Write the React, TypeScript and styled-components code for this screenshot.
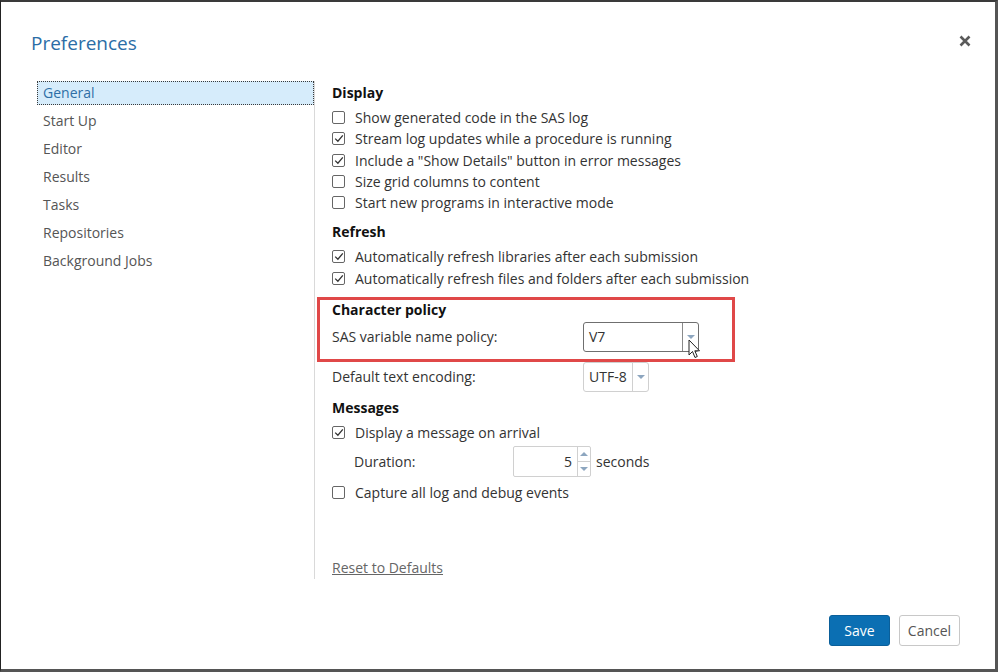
import React from "react";
import styled, { createGlobalStyle } from "styled-components";

const Global = createGlobalStyle`
  html, body { margin: 0; padding: 0; background: #fff; }
  body { font-family: "Open Sans", "Liberation Sans", sans-serif; }
  * { box-sizing: border-box; }
`;

const Frame = styled.div`
  width: 998px;
  height: 672px;
  background: #fff;
  border-top: 2px solid #3a3a3a;
  border-left: 1px solid #222;
  border-right: 3px solid #555;
  border-bottom: 3px solid #555;
  display: flex;
  flex-direction: column;
  position: relative;
  overflow: hidden;
`;

const Header = styled.div`
  height: 79px;
  display: flex;
  align-items: flex-start;
  justify-content: space-between;
  padding: 28px 23px 0 30px;
`;

const Title = styled.h1`
  margin: 0;
  font-size: 19px;
  font-weight: 400;
  color: #2b6da6;
  line-height: 26px;
`;

const Close = styled.button`
  border: 0;
  background: none;
  padding: 0;
  width: 14px;
  height: 14px;
  margin-top: 4px;
  display: flex;
  align-items: center;
  justify-content: center;
  cursor: pointer;
`;

const Body = styled.div`
  display: flex;
  height: 498px;
  padding-left: 36px;
`;

const Nav = styled.ul`
  list-style: none;
  margin: 0;
  padding: 0;
  width: 277px;
  flex-shrink: 0;
`;

const NavItem = styled.li<{ $active?: boolean }>`
  height: 24px;
  margin-bottom: 4px;
  padding-left: 5px;
  font-size: 14px;
  line-height: 22px;
  color: ${(p) => (p.$active ? "#2e6fa6" : "#555")};
  background: ${(p) => (p.$active ? "#d6ecfb" : "transparent")};
  border: 1px dotted ${(p) => (p.$active ? "#3a3a3a" : "transparent")};
`;

const Divider = styled.div`
  width: 1px;
  background: #d9d9d9;
  flex-shrink: 0;
`;

const Content = styled.div`
  flex: 1;
  padding: 2px 0 0 17px;
  display: flex;
  flex-direction: column;
  color: #333;
  font-size: 14px;
`;

const Heading = styled.div<{ $top?: number; $bottom?: number }>`
  font-weight: 700;
  color: #111;
  font-size: 14px;
  line-height: 20px;
  margin-top: ${(p) => p.$top ?? 0}px;
  margin-bottom: ${(p) => p.$bottom ?? 4}px;
`;

const Row = styled.label<{ $top?: number }>`
  display: flex;
  align-items: center;
  height: 21.25px;
  gap: 10px;
  margin-top: ${(p) => p.$top ?? 0}px;
  color: #333;
`;

const Box = styled.span`
  width: 13px;
  height: 13px;
  border: 1px solid #666;
  border-radius: 2px;
  display: flex;
  align-items: center;
  justify-content: center;
  background: #fff;
  flex-shrink: 0;
`;

const Highlight = styled.div`
  margin: 8px 0 0 -15px;
  width: 418px;
  border: 3px solid #e04848;
  padding: 0 0 7px 12px;
`;

const FieldRow = styled.div<{ $label: number; $indent?: number; $top?: number }>`
  display: flex;
  align-items: center;
  height: 30px;
  margin-top: ${(p) => p.$top ?? 0}px;
  padding-left: ${(p) => p.$indent ?? 0}px;
  & > span:first-child {
    width: ${(p) => p.$label}px;
    flex-shrink: 0;
    color: #333;
  }
`;

const Select = styled.div<{ $w: number; $dark?: boolean }>`
  width: ${(p) => p.$w}px;
  height: 30px;
  border: 1px solid ${(p) => (p.$dark ? "#6f6f6f" : "#d0d0d0")};
  border-radius: 3px;
  display: flex;
  align-items: stretch;
  background: #fff;
`;

const SelectValue = styled.div`
  flex: 1;
  display: flex;
  align-items: center;
  padding-left: 5px;
  color: #333;
`;

const SelectArrow = styled.div<{ $dark?: boolean }>`
  width: 16px;
  border-left: 1px solid ${(p) => (p.$dark ? "#8a8a8a" : "#d0d0d0")};
  display: flex;
  align-items: center;
  justify-content: center;
`;

const Tri = styled.span<{ $up?: boolean }>`
  width: 0;
  height: 0;
  border-left: 4px solid transparent;
  border-right: 4px solid transparent;
  ${(p) =>
    p.$up
      ? "border-bottom: 4px solid #8da6bf;"
      : "border-top: 4px solid #8da6bf;"}
`;

const Spinner = styled.div`
  width: 78px;
  height: 31px;
  border: 1px solid #d0d0d0;
  border-radius: 2px;
  display: flex;
  align-items: stretch;
`;

const SpinValue = styled.div`
  flex: 1;
  display: flex;
  align-items: center;
  justify-content: flex-end;
  padding-right: 5px;
  color: #333;
`;

const SpinButtons = styled.div`
  width: 13px;
  border-left: 1px solid #d0d0d0;
  display: flex;
  flex-direction: column;
  & > div {
    flex: 1;
    display: flex;
    align-items: center;
    justify-content: center;
  }
  & > div:first-child {
    border-bottom: 1px solid #d0d0d0;
  }
`;

const Suffix = styled.span`
  margin-left: 5px;
  color: #333;
`;

const Spacer = styled.div`
  flex: 1;
`;

const ResetLink = styled.a`
  color: #666;
  text-decoration: underline;
  font-size: 14px;
  line-height: 20px;
  margin-bottom: 1px;
  cursor: pointer;
  align-self: flex-start;
`;

const Footer = styled.div`
  display: flex;
  justify-content: flex-end;
  gap: 9px;
  padding: 36px 35px 0 0;
`;

const Button = styled.button<{ $primary?: boolean }>`
  width: 61px;
  height: 31px;
  border-radius: 3px;
  font-family: inherit;
  font-size: 14px;
  cursor: pointer;
  color: ${(p) => (p.$primary ? "#fff" : "#555")};
  background: ${(p) => (p.$primary ? "#0b6fb3" : "#fff")};
  border: 1px solid ${(p) => (p.$primary ? "#0a5f9a" : "#c8c8c8")};
`;

const Pointer = styled.svg`
  position: absolute;
  left: 687px;
  top: 337px;
`;

const Check = () => (
  <svg width="10" height="9" viewBox="0 0 10 9">
    <path d="M1.2 4.6 L3.9 7.2 L8.8 1.4" fill="none" stroke="#333" strokeWidth="1.3" />
  </svg>
);

const CheckRow = ({ checked, children, top }: { checked?: boolean; children: React.ReactNode; top?: number }) => (
  <Row $top={top}>
    <Box>{checked && <Check />}</Box>
    <span>{children}</span>
  </Row>
);

const navItems = ["General", "Start Up", "Editor", "Results", "Tasks", "Repositories", "Background Jobs"];

export default function App() {
  return (
    <>
      <Global />
      <Frame>
        <Header>
          <Title>Preferences</Title>
          <Close aria-label="Close">
            <svg width="12" height="12" viewBox="0 0 12 12">
              <path d="M1.5 1.5 L10.5 10.5 M10.5 1.5 L1.5 10.5" stroke="#5a5a5a" strokeWidth="2.6" />
            </svg>
          </Close>
        </Header>
        <Body>
          <Nav>
            {navItems.map((n, i) => (
              <NavItem key={n} $active={i === 0}>
                {n}
              </NavItem>
            ))}
          </Nav>
          <Divider />
          <Content>
            <Heading>Display</Heading>
            <CheckRow>Show generated code in the SAS log</CheckRow>
            <CheckRow checked>Stream log updates while a procedure is running</CheckRow>
            <CheckRow checked>Include a "Show Details" button in error messages</CheckRow>
            <CheckRow>Size grid columns to content</CheckRow>
            <CheckRow>Start new programs in interactive mode</CheckRow>

            <Heading $top={9}>Refresh</Heading>
            <CheckRow checked>Automatically refresh libraries after each submission</CheckRow>
            <CheckRow checked>Automatically refresh files and folders after each submission</CheckRow>

            <Highlight>
              <Heading $bottom={2}>Character policy</Heading>
              <FieldRow $label={251}>
                <span>SAS variable name policy:</span>
                <Select $w={116} $dark>
                  <SelectValue>V7</SelectValue>
                  <SelectArrow $dark>
                    <Tri />
                  </SelectArrow>
                </Select>
              </FieldRow>
            </Highlight>

            <FieldRow $label={251}>
              <span>Default text encoding:</span>
              <Select $w={66}>
                <SelectValue>UTF-8</SelectValue>
                <SelectArrow>
                  <Tri />
                </SelectArrow>
              </Select>
            </FieldRow>

            <Heading $top={6.5}>Messages</Heading>
            <CheckRow checked>Display a message on arrival</CheckRow>
            <FieldRow $label={159} $indent={22} $top={3}>
              <span>Duration:</span>
              <Spinner>
                <SpinValue>5</SpinValue>
                <SpinButtons>
                  <div>
                    <Tri $up />
                  </div>
                  <div>
                    <Tri />
                  </div>
                </SpinButtons>
              </Spinner>
              <Suffix>seconds</Suffix>
            </FieldRow>
            <CheckRow top={5}>Capture all log and debug events</CheckRow>
            <Spacer />
            <ResetLink>Reset to Defaults</ResetLink>
          </Content>
        </Body>
        <Footer>
          <Button $primary>Save</Button>
          <Button>Cancel</Button>
        </Footer>
        <Pointer width="14" height="22" viewBox="0 0 14 22">
          <path d="M1 1 L1 16 L4.5 12.5 L7 18.5 L9.3 17.5 L6.8 11.8 L11.5 11.8 Z" fill="#fff" stroke="#222" strokeWidth="1" strokeLinejoin="round" />
        </Pointer>
      </Frame>
    </>
  );
}
